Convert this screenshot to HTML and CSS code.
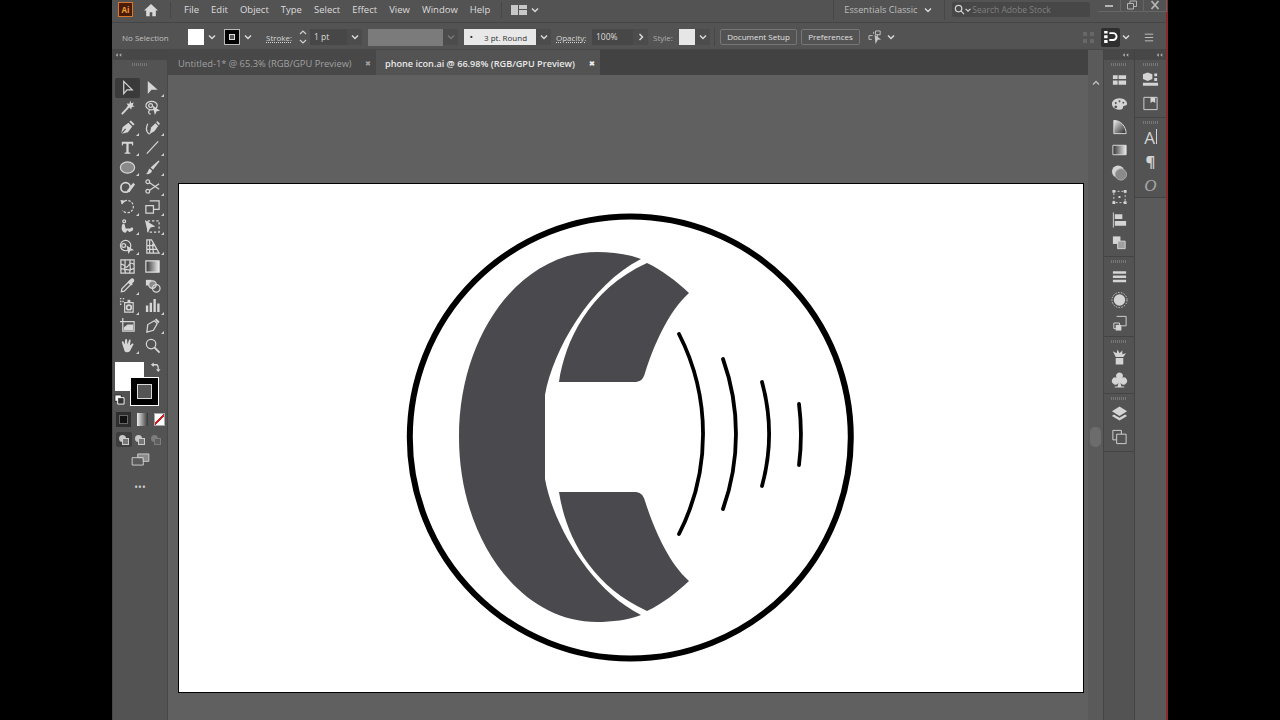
FILE: index.html
```html
<!DOCTYPE html>
<html>
<head>
    <title>phone icon.ai</title>
    <link rel="stylesheet" href="styles.css">
</head>
<body>
    <svg class="sprite">
        <symbol id="chev" viewBox="0 0 10 10"><path d="M2 3.5 5 6.5 8 3.5" fill="none" stroke="currentColor" stroke-width="1.5"/></symbol>
        <symbol id="arrows" viewBox="0 0 10 8"><path d="M1 4 4 1.5V6.5ZM6 4 9 1.5V6.5Z" fill="currentColor"/></symbol>
    </svg>

    <div class="side-black"></div>

    <div class="app">
        <!-- Menu bar -->
        <header class="menubar">
            <div class="ai-logo">Ai</div>
            <svg class="home" viewBox="0 0 18 16"><path d="M9 1 1 8.500H3.500V15H7.500V10.500H10.500V15H14.500V8.500H17Z"/></svg>
            <div class="vline line-home"></div>
            <nav class="menus">
                <span>File</span><span>Edit</span><span>Object</span><span>Type</span><span>Select</span><span>Effect</span><span>View</span><span>Window</span><span>Help</span>
            </nav>
            <div class="vline line-help"></div>
            <svg class="layout-icon" viewBox="0 0 16 10"><path d="M0 0H7V10H0ZM8 0H16V4H8ZM8 5H16V10H8Z"/></svg>
            <svg class="chev chev-layout"><use href="#chev"/></svg>
            <div class="vline line-ws"></div>
            <span class="workspace">Essentials Classic</span>
            <svg class="chev chev-ws"><use href="#chev"/></svg>
            <div class="vline line-search"></div>
            <div class="search">
                <svg class="search-icon" viewBox="0 0 12 12"><circle cx="5" cy="5" r="3.500"/><path d="M7.500 7.500 11 11"/></svg>
                <svg class="chev chev-search"><use href="#chev"/></svg>
                <span>Search Adobe Stock</span>
            </div>
            <div class="winbtns">
                <div class="winbtn"><svg viewBox="0 0 12 10"><path d="M2 6H10" stroke-width="2"/></svg></div>
                <div class="winbtn"><svg viewBox="0 0 12 10"><path d="M1.500 3.500H7.500V9H1.500ZM4 3.500V1H10.500V6.500H7.500"/></svg></div>
                <div class="winbtn"><svg viewBox="0 0 12 10"><path d="M2.500 1 9.500 9M9.500 1 2.500 9" stroke-width="1.800"/></svg></div>
            </div>
        </header>

        <!-- Control bar -->
        <section class="controlbar">
            <span class="no-selection">No Selection</span>
            <div class="swatch fill-swatch"></div>
            <svg class="chev chev-fill"><use href="#chev"/></svg>
            <div class="stroke-swatch"><i></i></div>
            <svg class="chev chev-stroke"><use href="#chev"/></svg>
            <span class="lbl lbl-stroke">Stroke:</span>
            <svg class="spinner" viewBox="0 0 10 18"><path d="M2 6 5 3 8 6M2 12 5 15 8 12"/></svg>
            <div class="field field-pt">1 pt</div>
            <div class="field-btn"><svg class="chev"><use href="#chev"/></svg></div>
            <div class="gray-box"></div>
            <div class="field-btn dim"><svg class="chev"><use href="#chev"/></svg></div>
            <div class="brush"><b>•</b><span>3 pt. Round</span></div>
            <div class="field-btn"><svg class="chev"><use href="#chev"/></svg></div>
            <span class="lbl lbl-opacity">Opacity:</span>
            <div class="field field-opacity">100%</div>
            <div class="field-btn"><svg class="chev chev-right"><use href="#chev"/></svg></div>
            <span class="lbl lbl-style">Style:</span>
            <div class="swatch style-swatch"></div>
            <div class="field-btn"><svg class="chev"><use href="#chev"/></svg></div>
            <div class="vline line-btns"></div>
            <div class="btn btn-doc">Document Setup</div>
            <div class="btn btn-pref">Preferences</div>
            <svg class="arrange" viewBox="0 0 16 16"><path d="M1 6H5M1 10H4M1 6V10M8 1H13V5H8ZM10 9V5M6 4V2"/><path class="solid" d="M7 5 14 10 10.500 10.500 8 15Z"/></svg>
            <svg class="chev chev-arrange"><use href="#chev"/></svg>
            <div class="grips"><i></i><i></i><i></i><i></i></div>
            <div class="snap"><svg viewBox="0 0 16 14"><path d="M0 0H4V3H0ZM0 5H4V8.500H0ZM0 10.500H4V14H0Z"/><path d="M6 2.500H10.500A4 4 0 0 1 10.500 10.500H6" fill="none" stroke="#fff" stroke-width="2.200"/></svg></div>
            <svg class="chev chev-snap"><use href="#chev"/></svg>
            <svg class="list-icon" viewBox="0 0 12 10"><path d="M1 1H11M1 5H11M1 9H11"/></svg>
        </section>

        <div class="workarea">
            <!-- Tools -->
            <aside class="toolbar">
                <div class="panel-top"><svg class="collapse"><use href="#arrows"/></svg></div>
                <div class="grip grip-tools"></div>
                <div class="tools">
                    <div class="tool active"><svg class="ic" viewBox="0 0 18 18"><path d="M5 2.500V15.500L8.500 11.500H14Z"/></svg></div>
                    <div class="tool more"><svg class="ic" viewBox="0 0 18 18"><path class="f" d="M4 2V16L8 11.500H14.500Z"/></svg></div>
                    <div class="tool"><svg class="ic" viewBox="0 0 18 18"><path d="M3 16 11 7.500" stroke-width="2"/><path class="f" d="M12 1.500 12.800 4.500 15.500 3.800 14.500 6.500 16.500 8 13.500 8.500 13 11 11 9 8 9.500 9.500 7 8 4.800 11 5Z"/></svg></div>
                    <div class="tool"><svg class="ic" viewBox="0 0 18 18"><ellipse cx="8" cy="7" rx="6" ry="4.500"/><circle cx="7" cy="7" r="2"/><path d="M6 11.500C4 14 5 16 7 16"/><path class="f" d="M9 7 17 12.500 13.500 13 11.500 17Z"/></svg></div>
                    <div class="tool more"><svg class="ic" viewBox="0 0 18 18"><path class="f" d="M2 16 4 8.500 10 4 14 8 9.500 14Z"/><path class="f" d="M11 3 12.500 1.500 16.500 5.500 15 7Z"/><path d="M2 16 7 10.500" stroke="#535353"/></svg></div>
                    <div class="tool more"><svg class="ic" viewBox="0 0 18 18"><path class="f" d="M6 16 7.500 9 12 4.500 15 7.500 11 13Z"/><path d="M6 16C1 13 2 9 4 5"/><path class="f" d="M13 3.500 14 2 17 5 15.500 6.500Z"/></svg></div>
                    <div class="tool more"><svg class="ic" viewBox="0 0 18 18"><path class="f" d="M3 3H15V7H14L13.500 5H10.200V14L12 14.500V15.500H6V14.500L7.800 14V5H4.500L4 7H3Z"/></svg></div>
                    <div class="tool more"><svg class="ic" viewBox="0 0 18 18"><path d="M3 15.500 15 2.500"/></svg></div>
                    <div class="tool more"><svg class="ic ic-shape" viewBox="0 0 18 18"><ellipse cx="9" cy="9" rx="7.500" ry="6"/></svg></div>
                    <div class="tool more"><svg class="ic" viewBox="0 0 18 18"><path class="f" d="M15.500 1.500 16.500 2.500 9.500 11.500 7 9Z"/><path class="f" d="M6 10 8.500 12.500C8 15 5 16.500 2 16 4 15 4 12 6 10Z"/></svg></div>
                    <div class="tool"><svg class="ic" viewBox="0 0 18 18"><circle cx="7" cy="10" r="5" stroke-width="1.800"/><path class="f" d="M8 14 15 5 17 7 11 15Z"/></svg></div>
                    <div class="tool more"><svg class="ic" viewBox="0 0 18 18"><circle cx="4" cy="4" r="2"/><circle cx="4" cy="14" r="2"/><path d="M6 5 16 12M6 13 16 6"/></svg></div>
                    <div class="tool more"><svg class="ic" viewBox="0 0 18 18"><path d="M3 6A6.500 6.500 0 1 1 3.500 13" stroke-dasharray="2.500 1.500"/><path class="f" d="M1.500 2 7 3 3 7Z"/></svg></div>
                    <div class="tool more"><svg class="ic" viewBox="0 0 18 18"><path d="M2 8H10V16H2ZM6 3H16V12H10"/></svg></div>
                    <div class="tool more"><svg class="ic" viewBox="0 0 18 18"><path class="f" d="M3 9C3 6 5 5 6 7L7 11 12 11C12.500 9.500 15 9.500 15 11.500 15 14 13 14 11 15L9 13 7 15.500C5 16 2 13 3 9Z"/><circle cx="5.500" cy="3.500" r="1.500"/></svg></div>
                    <div class="tool more"><svg class="ic" viewBox="0 0 18 18"><path d="M4 3H16V15H4Z" stroke-dasharray="2.500 2"/><path class="f" d="M1 2 12 9 7 10 4 15Z"/></svg></div>
                    <div class="tool more"><svg class="ic" viewBox="0 0 18 18"><circle cx="7" cy="8" r="5.500"/><circle cx="5" cy="8" r="2"/><path class="f" d="M8 8 16 13 12 13.500 10 17Z"/></svg></div>
                    <div class="tool more"><svg class="ic" viewBox="0 0 18 18"><path d="M3 2V16H16L8 2ZM3 8H11M3 12H14M6 2V16M9 6 10 16"/></svg></div>
                    <div class="tool"><svg class="ic" viewBox="0 0 18 18"><path d="M2 2H16V16H2ZM2 7C6 5 6 12 9 9S12 4 16 7M2 12C6 10 9 15 16 11M6 2C8 6 4 10 7 16M12 2C10 6 14 11 11 16"/></svg></div>
                    <div class="tool"><svg class="ic ic-grad" viewBox="0 0 18 18"><defs><linearGradient id="grad"><stop offset="0" stop-color="#333"/><stop offset="1" stop-color="#eee"/></linearGradient></defs><path d="M2 3H16V15H2Z" fill="url(#grad)"/></svg></div>
                    <div class="tool more"><svg class="ic" viewBox="0 0 18 18"><path d="M2.500 15.500 3 12.500 10 5.500 12.500 8 5.500 15Z"/><path class="f" d="M10.500 4 13 1.500C14.500 .5 17 3 16 4.500L14 7 14.500 8 13.500 9 9.500 5 10 4Z"/></svg></div>
                    <div class="tool"><svg class="ic" viewBox="0 0 18 18"><path class="f" d="M2 3H8V9H2Z"/><circle cx="9" cy="8" r="4" fill="#8a8a8a"/><circle cx="13" cy="12" r="4"/></svg></div>
                    <div class="tool more"><svg class="ic" viewBox="0 0 18 18"><path d="M6 6H15V16H6Z"/><path class="f" d="M9 3H12V6H9Z"/><circle cx="10.500" cy="11" r="2.500" stroke-width="1.800"/><path class="f" d="M1 1H2.500V2.500H1ZM4 1H5.500V2.500H4ZM1 4H2.500V5.500H1ZM1 7H2.500V8.500H1ZM3.500 4H5V5.500H3.500Z"/></svg></div>
                    <div class="tool more"><svg class="ic" viewBox="0 0 18 18"><path class="f" d="M2 9H4.500V16H2ZM6 6H8.500V16H6ZM10 2H12.500V16H10ZM14 7H16.500V16H14Z"/></svg></div>
                    <div class="tool"><svg class="ic" viewBox="0 0 18 18"><path d="M1 5H5M4 1V15H16V5H4" /><path class="f" d="M9 8H15V14H5V11Z"/></svg></div>
                    <div class="tool more"><svg class="ic" viewBox="0 0 18 18"><path d="M3 16 4 8 11 4 14 7 10 14Z"/><path class="f" d="M11.500 3 13 1.500 16.500 5 15 6.500Z"/></svg></div>
                    <div class="tool more"><svg class="ic" viewBox="0 0 18 18"><path class="f" d="M4 9 3 5.500C3 4 4.500 4 5 5.500L6 8 6.500 3C7 1.800 8.300 1.800 8.500 3L9 8 10.500 3.500C11 2.200 12.500 2.800 12.300 4L11.500 9 14 7C15 6.500 16 7.500 15 8.500L11.500 15C10 16.500 7 16.500 6 15Z"/></svg></div>
                    <div class="tool"><svg class="ic" viewBox="0 0 18 18"><circle cx="7.500" cy="7.500" r="5"/><path d="M11 11 16.500 16.500" stroke-width="2"/></svg></div>
                </div>

                <div class="fill-stroke">
                    <div class="fill-box"></div>
                    <div class="stroke-box"><i></i></div>
                    <svg class="swap" viewBox="0 0 12 12"><path d="M3 3H7C9 3 9 5 9 8"/><path class="solid" d="M1 3 4 .5V5.500ZM9 11 6.500 8H11.500Z"/></svg>
                    <svg class="defaults" viewBox="0 0 12 12"><path class="back" d="M1 1H8V8H1Z"/><path class="front" d="M4 4H11V11H4Z"/></svg>
                </div>

                <div class="color-modes">
                    <div class="mode mode-color"><i></i></div>
                    <div class="mode mode-grad"></div>
                    <div class="mode mode-none"></div>
                </div>

                <div class="draw-modes">
                    <div class="draw on"><i></i><i></i></div>
                    <div class="draw"><i></i><i></i></div>
                    <div class="draw faint"><i></i><i></i></div>
                </div>

                <svg class="screen-mode" viewBox="0 0 20 14"><path d="M1 5H13V13H1Z" fill="#5a5a5a"/><path d="M7 1H19V9H13V5H7Z" fill="#8a8a8a"/></svg>
                <div class="dots">•••</div>
            </aside>

            <!-- Document area -->
            <main class="docs">
                <div class="tabs">
                    <div class="tab tab-first"><span>Untitled-1* @ 65.3% (RGB/GPU Preview)</span><em>✖</em></div>
                    <div class="tab tab-on"><span>phone icon.ai @ 66.98% (RGB/GPU Preview)</span><em>✖</em></div>
                </div>
                <div class="canvas">
                    <div class="artboard">
                        <svg class="art" viewBox="179 184 904 508">
                            <ellipse class="ring" cx="630.300" cy="437.500" rx="220.500" ry="221"/>
                            <path class="phone" d="M641 259C628 254 612 252 597 252 520 252 459 335 459 437 459 539 520 622 597 622 612 622 628 620 641 615 590 589 553 524 545 479V395C553 350 590 285 641 259Z"/>
                            <path class="phone" d="M647 263C662 270 676 281 689 293 668 312 654 345 645 373 643 380 640 382 634 382H559C565 342 588 290 647 263Z"/>
                            <path class="phone" d="M647 611C662 604 676 593 689 581 668 562 654 529 645 501 643 494 640 492 634 492H559C565 532 588 584 647 611Z"/>
                            <path class="wave" d="M679 334A220 220 0 0 1 679 534"/>
                            <path class="wave" d="M723 359A223 223 0 0 1 723 509"/>
                            <path class="wave" d="M762 382A197 197 0 0 1 762 486"/>
                            <path class="wave" d="M799 404A241 241 0 0 1 799 465"/>
                        </svg>
                    </div>
                </div>
            </main>

            <div class="scrollbar">
                <svg class="chev chev-up"><use href="#chev"/></svg>
                <div class="thumb"></div>
            </div>

            <!-- Panel docks -->
            <aside class="dock">
                <div class="panel-top"><svg class="collapse"><use href="#arrows"/></svg></div>
                <div class="group group-a">
                    <div class="grip"></div>
                    <svg class="pi" viewBox="0 0 18 18"><path class="f" d="M2 4H7V8H2ZM8 4H16V8H8ZM2 9.500H7V14H2ZM8 9.500H16V14H8Z"/></svg>
                    <svg class="pi" viewBox="0 0 18 18"><path class="f" fill-rule="evenodd" d="M9 3C14 3 17 6 17 9 17 11 14 10.500 13 11.500S14 15 9 15C4 15 1 12 1 9S4 3 9 3ZM5 7A1 1 0 1 0 5.100 7ZM9 5A1 1 0 1 0 9.100 5ZM13 6.500A1 1 0 1 0 13.100 6.500ZM5 10.500A1.500 1.500 0 1 0 5.100 10.500Z"/></svg>
                    <svg class="pi" viewBox="0 0 18 18"><defs><linearGradient id="g2" x1="0" y1="0" x2="1" y2="1"><stop offset="0" stop-color="#eee"/><stop offset="1" stop-color="#222"/></linearGradient></defs><path d="M3 2C10 2 16 8 16 16H3Z" fill="url(#g2)" stroke="#ddd"/></svg>
                    <svg class="pi" viewBox="0 0 18 18"><path d="M2 4H16V14H2Z" fill="url(#grad)" stroke="#ddd"/></svg>
                    <svg class="pi" viewBox="0 0 18 18"><circle class="f" cx="7.500" cy="7.500" r="6.500"/><circle cx="10.500" cy="10.500" r="6" fill="#8a8a8a" stroke="#aaa"/></svg>
                    <svg class="pi" viewBox="0 0 18 18"><path d="M3 3H15V15H3Z" stroke-dasharray="2 2"/><path class="f" d="M1.500 1.500H4.500V4.500H1.500ZM13.500 1.500H16.500V4.500H13.500ZM1.500 13.500H4.500V16.500H1.500ZM13.500 13.500H16.500V16.500H13.500ZM8 8H10V10H8Z"/></svg>
                    <svg class="pi" viewBox="0 0 18 18"><path d="M2.500 1V17"/><path class="f" d="M4 3H12V8H4ZM4 10H16V15H4Z"/></svg>
                    <svg class="pi" viewBox="0 0 18 18"><path class="f" d="M2 2H10V10H2Z"/><path d="M7 7H15V15H7Z" fill="#a0a0a0"/></svg>
                </div>
                <div class="group group-b">
                    <div class="grip"></div>
                    <svg class="pi" viewBox="0 0 18 18"><path class="f" d="M2 3H16V5.500H2ZM2 7.500H16V10H2ZM2 12H16V14.500H2Z"/></svg>
                    <svg class="pi" viewBox="0 0 18 18"><circle class="f" cx="9" cy="9" r="6"/><circle cx="9" cy="9" r="8" stroke-dasharray="1.500 1.500"/></svg>
                    <svg class="pi" viewBox="0 0 18 18"><path d="M6 2H16V12H11"/><path d="M3 9H9V15H3Z"/><path class="f" d="M5 11H11V17H5Z"/></svg>
                </div>
                <div class="group group-c">
                    <div class="grip"></div>
                    <svg class="pi" viewBox="0 0 18 18"><path class="f" d="M5 10H13V17H5ZM5 9 2 3 6 5 7 1 9 5 12 2 12 6 16 5 13 9Z"/></svg>
                    <svg class="pi" viewBox="0 0 18 18"><path class="f" d="M9 1A3.500 3.500 0 0 1 12 6.500 3.800 3.800 0 1 1 10 12L11 16H14V17H4V16H7L8 12A3.800 3.800 0 1 1 6 6.500 3.500 3.500 0 0 1 9 1Z"/></svg>
                </div>
                <div class="group group-d">
                    <div class="grip"></div>
                    <svg class="pi" viewBox="0 0 18 18"><path class="f" d="M9 1 17 6 9 11 1 6Z"/><path class="f" d="M3 9.500 9 13 15 9.500 17 11 9 16 1 11Z"/></svg>
                    <svg class="pi" viewBox="0 0 18 18"><path d="M2 2H11V6M2 2V12H6"/><path d="M6 6H16V16H6Z"/></svg>
                </div>
            </aside>

            <aside class="dock dock-2">
                <div class="panel-top"><svg class="collapse"><use href="#arrows"/></svg></div>
                <div class="group group-e">
                    <div class="grip"></div>
                    <svg class="pi" viewBox="0 0 18 18"><path class="f" d="M6 1 11 3V8L6 10 1 8V3ZM13 2H16V5H13ZM13 7H16V10H13ZM1 12H17V15H1Z"/></svg>
                    <svg class="pi" viewBox="0 0 18 18"><path d="M2 3H16V16H2Z"/><path class="f" d="M9 3H14V9L11.500 7.500 9 9Z"/></svg>
                </div>
                <div class="group group-f">
                    <div class="grip"></div>
                    <div class="pi-text pi-a">A<i></i></div>
                    <div class="pi-text pi-para">¶</div>
                    <div class="pi-text pi-o">O</div>
                </div>
            </aside>
        </div>
    </div>

    <div class="side-black"></div>
</body>
</html>
```

FILE: styles.css
```css
html, body {
    margin: 0;
    width: 1280px;
    height: 720px;
    overflow: hidden;
    background-color: #000;
}

body {
    display: flex;
    font-family: "Open Sans", Arial, sans-serif;
    color: #d4d4d4;
}

.sprite {
    display: none;
}

.side-black {
    width: 112px;
    background-color: #000;
}

.app {
    width: 1056px;
    height: 720px;
    display: flex;
    flex-direction: column;
    background-color: #535353;
    border-right: 2px solid #8c2a2a;
    box-sizing: border-box;
}

.chev {
    width: 10px;
    height: 10px;
    flex: none;
    color: #d8d8d8;
}

.vline {
    width: 1px;
    background-color: #474747;
    flex: none;
}

/* Menu bar */
.menubar {
    height: 23px;
    display: flex;
    align-items: center;
    flex: none;
    padding-bottom: 3px;
    border-bottom: 1px solid #454545;
    box-sizing: border-box;
}

.ai-logo {
    width: 13px;
    height: 13px;
    margin-left: 6px;
    background-color: #4a1c06;
    border: 1px solid #d9772a;
    color: #f09a3a;
    font-size: 8px;
    font-weight: 700;
    line-height: 13px;
    text-align: center;
    flex: none;
}

.home {
    width: 16px;
    height: 14px;
    margin-left: 10px;
    fill: #d8d8d8;
    flex: none;
}

.line-home {
    height: 16px;
    margin-left: 11px;
}

.menus {
    display: flex;
    gap: 12px;
    margin-left: 13px;
    font-size: 9.500px;
    color: #dcdcdc;
    flex: none;
}

.line-help {
    height: 16px;
    margin-left: 11px;
}

.layout-icon {
    width: 16px;
    height: 10px;
    margin-left: 9px;
    fill: #c8c8c8;
    flex: none;
}

.chev-layout {
    margin-left: 3px;
}

.line-ws {
    height: 20px;
    margin-left: 293px;
}

.workspace {
    margin-left: 10px;
    width: 73px;
    font-size: 9.200px;
    color: #bdbdbd;
    white-space: nowrap;
    flex: none;
}

.chev-ws {
    margin-left: 6px;
}

.line-search {
    height: 20px;
    margin-left: 11px;
}

.search {
    width: 138px;
    height: 15px;
    margin-left: 7px;
    display: flex;
    align-items: center;
    background-color: #474747;
    border-radius: 2px;
    font-size: 8.500px;
    color: #808080;
    flex: none;
}

.search span {
    white-space: nowrap;
}

.search-icon {
    width: 11px;
    height: 11px;
    margin-left: 2px;
    fill: none;
    stroke: #d0d0d0;
    stroke-width: 1.400;
    flex: none;
}

.chev-search {
    width: 8px;
    height: 8px;
    margin-left: -1px;
}

.winbtns {
    display: flex;
    margin-left: 8px;
    align-self: flex-start;
    flex: none;
}

.winbtn {
    width: 23px;
    height: 12px;
    display: flex;
    justify-content: center;
    border-right: 1px solid #666;
    border-bottom: 1px solid #666;
    box-sizing: border-box;
}

.winbtn svg {
    width: 12px;
    height: 10px;
    fill: none;
    stroke: #b4b4b4;
    stroke-width: 1;
}

/* Control bar */
.controlbar {
    height: 27px;
    flex: none;
    display: flex;
    align-items: center;
    font-size: 8px;
    padding-top: 2px;
    border-bottom: 1px solid #474747;
    box-sizing: border-box;
}

.no-selection {
    margin-left: 10px;
    width: 46px;
    color: #c0c0c0;
    white-space: nowrap;
}

.swatch {
    height: 16px;
    width: 16px;
    background-color: #fff;
    flex: none;
}

.fill-swatch {
    margin-left: 20px;
}

.chev-fill {
    margin-left: 3px;
}

.stroke-swatch {
    width: 16px;
    height: 16px;
    margin-left: 7px;
    background-color: #000;
    border: 1px solid #bbb;
    box-sizing: border-box;
    display: flex;
    align-items: center;
    justify-content: center;
    flex: none;
}

.stroke-swatch i {
    width: 4px;
    height: 4px;
    border: 1px solid #ddd;
    background-color: #555;
}

.chev-stroke {
    margin-left: 3px;
}

.lbl {
    text-decoration: underline dotted;
    white-space: nowrap;
    color: #d8d8d8;
}

.lbl-stroke {
    margin-left: 13px;
    width: 29px;
}

.spinner {
    width: 10px;
    height: 18px;
    margin-left: 3px;
    fill: none;
    stroke: #d0d0d0;
    stroke-width: 1.200;
    flex: none;
}

.field {
    height: 16px;
    line-height: 16px;
    background-color: #474747;
    color: #dcdcdc;
    padding-left: 4px;
    box-sizing: border-box;
    flex: none;
    font-size: 8.500px;
}

.field-pt {
    width: 37px;
    margin-left: 2px;
}

.field-btn {
    width: 15px;
    height: 16px;
    display: flex;
    align-items: center;
    justify-content: center;
    background-color: #4c4c4c;
    flex: none;
}

.field-btn.dim .chev {
    color: #777;
}

.gray-box {
    width: 75px;
    height: 17px;
    margin-left: 6px;
    background-color: #7b7b7b;
    flex: none;
}

.brush {
    width: 72px;
    height: 16px;
    margin-left: 6px;
    display: flex;
    align-items: center;
    background-color: #e8e8e8;
    color: #333;
    flex: none;
    white-space: nowrap;
}

.brush b {
    margin-left: 6px;
    width: 14px;
    font-size: 7px;
}

.lbl-opacity {
    margin-left: 5px;
    width: 31px;
}

.field-opacity {
    width: 41px;
    margin-left: 5px;
}

.chev-right {
    transform: rotate(-90deg);
}

.lbl-style {
    margin-left: 5px;
    width: 21px;
    text-decoration: none;
    color: #adadad;
}

.style-swatch {
    margin-left: 5px;
    background-color: #e6e6e6;
}

.line-btns {
    height: 18px;
    margin-left: 4px;
}

.btn {
    height: 16px;
    line-height: 14px;
    border: 1px solid #767676;
    border-radius: 2px;
    box-sizing: border-box;
    text-align: center;
    color: #e0e0e0;
    flex: none;
    white-space: nowrap;
}

.btn-doc {
    width: 77px;
    margin-left: 5px;
}

.btn-pref {
    width: 59px;
    margin-left: 4px;
}

.arrange {
    width: 15px;
    height: 15px;
    margin-left: 8px;
    fill: none;
    stroke: #c4c4c4;
    flex: none;
}

.arrange .solid {
    fill: #c4c4c4;
    stroke: none;
}

.chev-arrange {
    margin-left: 3px;
}

.grips {
    width: 11px;
    margin-left: 187px;
    display: grid;
    grid-template-columns: 4px 4px;
    gap: 3px;
    flex: none;
}

.grips i {
    height: 4px;
    background-color: #686868;
}

.snap {
    width: 19px;
    height: 19px;
    margin-left: 7px;
    background-color: #2e2e2e;
    border-radius: 2px;
    display: flex;
    align-items: center;
    justify-content: center;
    flex: none;
}

.snap svg {
    width: 14px;
    height: 12px;
    fill: #fff;
}

.chev-snap {
    margin-left: 1px;
}

.list-icon {
    width: 10px;
    height: 9px;
    margin-left: 13px;
    fill: none;
    stroke: #d0d0d0;
    flex: none;
}

/* Work area */
.workarea {
    flex: 1;
    display: flex;
    min-height: 0;
}

.panel-top {
    height: 10px;
    background-color: #474747;
    display: flex;
    justify-content: flex-end;
    align-items: center;
    padding-right: 5px;
}

.collapse {
    width: 7px;
    height: 6px;
    color: #b0b0b0;
}

.grip {
    height: 3px;
    width: 16px;
    margin: 3px auto 0;
    flex: none;
    background-image: repeating-linear-gradient(90deg, #777 0 1px, transparent 1px 2px);
}

/* Toolbar */
.toolbar {
    width: 56px;
    flex: none;
    border-right: 1px solid #474747;
    box-sizing: border-box;
    border-left: 1px solid #474747;
}

.toolbar .panel-top {
    justify-content: flex-start;
    padding-left: 2px;
}

.grip-tools {
    height: 3px;
    margin: 3px auto 12px;
}

.tools {
    display: grid;
    grid-template-columns: 25px 25px;
    grid-auto-rows: 19.800px;
    padding-left: 2px;
}

.tool {
    position: relative;
    display: flex;
    align-items: center;
    justify-content: center;
}

.tool.active {
    background-color: #3a3a3a;
    border-radius: 2px;
}

.tool.more::after {
    content: "";
    position: absolute;
    right: 1px;
    bottom: 1px;
    border-left: 3px solid transparent;
    border-bottom: 3px solid #cfcfcf;
}

.ic {
    width: 17px;
    height: 17px;
    fill: none;
    stroke: #d6d6d6;
    stroke-width: 1.300;
}

.ic .f {
    fill: #d6d6d6;
    stroke: none;
}

.ic-shape ellipse {
    fill: #8a8a8a;
}

.ic-grad path {
    stroke: #ddd;
}

/* Fill and stroke */
.fill-stroke {
    position: relative;
    height: 50px;
    margin-top: 7px;
}

.fill-box {
    position: absolute;
    left: 2px;
    top: 0;
    width: 29px;
    height: 29px;
    background-color: #fff;
}

.stroke-box {
    position: absolute;
    left: 17px;
    top: 15px;
    width: 29px;
    height: 29px;
    box-sizing: border-box;
    background-color: #000;
    border: 1px solid #fff;
    display: flex;
    align-items: center;
    justify-content: center;
}

.stroke-box i {
    width: 13px;
    height: 13px;
    border: 1px solid #d8d8d8;
    background-color: #555;
}

.swap {
    position: absolute;
    left: 37px;
    top: 0;
    width: 11px;
    height: 11px;
    fill: none;
    stroke: #d8d8d8;
    stroke-width: 1.400;
}

.swap .solid {
    fill: #d8d8d8;
    stroke: none;
}

.defaults {
    position: absolute;
    left: 1px;
    top: 32px;
    width: 11px;
    height: 11px;
}

.defaults .back {
    fill: #fff;
    stroke: #222;
}

.defaults .front {
    fill: #333;
    stroke: #fff;
}

.color-modes {
    display: flex;
    gap: 3px;
    padding-left: 3px;
    height: 17px;
}

.mode {
    width: 15px;
    height: 15px;
    box-sizing: border-box;
}

.mode-color {
    background-color: #2e2e2e;
    display: flex;
    align-items: center;
    justify-content: center;
}

.mode-color i {
    width: 9px;
    height: 9px;
    background-color: #111;
    border: 1px solid #666;
    box-sizing: border-box;
}

.mode-grad {
    width: 11px;
    height: 13px;
    margin: 1px 0 0 3px;
    background: linear-gradient(90deg, #eee, #333);
}

.mode-none {
    width: 11px;
    height: 13px;
    margin: 1px 0 0 3px;
    background: linear-gradient(135deg, #fff 44%, #c22 44% 56%, #fff 56%);
    border: 1px solid #aaa;
}

.draw-modes {
    display: flex;
    padding-left: 3px;
    margin-top: 3px;
    height: 15px;
}

.draw {
    position: relative;
    width: 16px;
    height: 15px;
}

.draw.on {
    background-color: #3e3e3e;
    border-radius: 2px;
}

.draw i {
    position: absolute;
    left: 3px;
    top: 3px;
    width: 7px;
    height: 7px;
    border-radius: 50%;
    background-color: #c8c8c8;
}

.draw i + i {
    left: 6px;
    top: 6px;
    width: 5px;
    height: 5px;
    border-radius: 0;
    background-color: #777;
    border: 1px solid #ccc;
}

.draw.faint {
    opacity: 0.35;
}

.screen-mode {
    display: block;
    width: 19px;
    height: 13px;
    margin: 6px auto 0;
    stroke: #cfcfcf;
}

.dots {
    margin-top: 14px;
    text-align: center;
    font-size: 10px;
    color: #d0d0d0;
    letter-spacing: 0;
}

/* Documents */
.docs {
    width: 920px;
    flex: none;
    display: flex;
    flex-direction: column;
}

.tabs {
    height: 25px;
    flex: none;
    display: flex;
    background-color: #424242;
}

.tab {
    height: 25px;
    padding-top: 1px;
    display: flex;
    align-items: center;
    justify-content: space-between;
    white-space: nowrap;
    box-sizing: border-box;
}

.tab em {
    font-style: normal;
    font-size: 7px;
}

.tab-first {
    width: 208px;
    padding-left: 10px;
    padding-right: 5px;
    font-size: 9.350px;
    color: #a0a0a0;
    background-color: #484848;
}

.tab-on {
    width: 224px;
    padding-left: 9px;
    padding-right: 5px;
    font-size: 9.150px;
    color: #e8e8e8;
    font-weight: 600;
    background-color: #535353;
}

.canvas {
    flex: 1;
    background-color: #606060;
    padding: 108px 0 0 10px;
}

.artboard {
    width: 906px;
    height: 510px;
    background-color: #fff;
    border: 1px solid #000;
    box-sizing: border-box;
}

.art {
    display: block;
    width: 904px;
    height: 508px;
}

.ring {
    fill: none;
    stroke: #000;
    stroke-width: 6;
}

.phone {
    fill: #4a4a4e;
}

.wave {
    fill: none;
    stroke: #000;
    stroke-width: 3.800;
    stroke-linecap: round;
}

/* Scrollbar */
.scrollbar {
    position: relative;
    width: 16px;
    flex: none;
    padding-top: 25px;
    background-color: #5a5a5a;
    border-right: 1px solid #444;
    box-sizing: border-box;
}

.chev-up {
    display: block;
    margin: 3px auto 0;
    transform: rotate(180deg);
    color: #bbb;
}

.thumb {
    position: absolute;
    left: 2px;
    top: 377px;
    width: 11px;
    height: 20px;
    background-color: #6c6c6c;
    border-radius: 5px;
}

/* Docks */
.dock {
    width: 31px;
    flex: none;
    border-right: 1px solid #444;
    box-sizing: border-box;
}

.dock-2 {
    flex: 1;
    border-right: none;
    background-color: #5a5a5a;
}

.dock-2 .group {
    background-color: #535353;
}

.dock-2 .panel-top {
    padding-right: 3px;
}

.group {
    display: flex;
    flex-direction: column;
    align-items: center;
    border-bottom: 1px solid #444;
    box-sizing: border-box;
}

.group-a {
    height: 197px;
    gap: 5.300px;
}

.group-b {
    height: 80px;
    gap: 5px;
}

.group-c {
    height: 57px;
    gap: 5px;
}

.group-d {
    height: 58px;
    gap: 5px;
}

.group-e {
    height: 58px;
    gap: 5px;
}

.group-f {
    height: 80px;
    gap: 3px;
}

.pi {
    width: 17px;
    height: 18px;
    fill: none;
    stroke: #d4d4d4;
    flex: none;
}

.pi .f {
    fill: #d4d4d4;
    stroke: none;
}

.pi-text {
    height: 21px;
    font-size: 17px;
    line-height: 21px;
    color: #d4d4d4;
}

.pi-a i {
    display: inline-block;
    width: 1px;
    height: 15px;
    background-color: #d4d4d4;
    margin-left: 1px;
}

.pi-para {
    font-weight: 700;
    font-size: 15px;
}

.pi-o {
    font-family: "Liberation Serif", serif;
    font-style: italic;
    color: #a8a8a8;
}
```
